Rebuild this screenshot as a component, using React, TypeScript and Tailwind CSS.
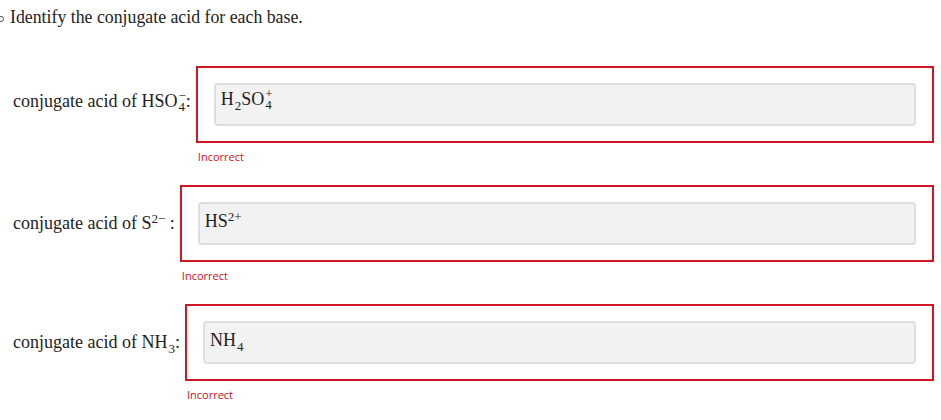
import type { ReactNode } from "react"

// sub + sup stacked on top of each other, like HSO4−
function Tensor({ sub, sup }: { sub: string; sup: string }) {
  return (
    <span className="inline-flex flex-col items-start align-baseline text-[13px] leading-[11px] relative -top-[7px] pl-[1px]">
      <span>{sup}</span>
      <span>{sub}</span>
    </span>
  )
}

function Sub({ children }: { children: ReactNode }) {
  return <span className="text-[13px] relative top-[5px] pl-[1px]">{children}</span>
}

function Sup({ children }: { children: ReactNode }) {
  return <span className="text-[13px] relative -top-[6px]">{children}</span>
}

interface RowProps {
  label: ReactNode
  value: ReactNode
}

function AnswerRow({ label, value }: RowProps) {
  return (
    <div className="flex items-start h-[98px]">
      <div className="h-[77px] flex items-center whitespace-nowrap pl-[13px] pr-[5px] text-[18px] leading-[20px] text-[#222]">
        {label}
      </div>
      <div className="flex-1 mr-[7px]">
        <div className="h-[77px] border-2 border-[#cf1624] px-[16px] py-[15px]">
          <div className="h-[43px] rounded-[4px] border-2 border-[#dedede] bg-[#f2f2f2] flex items-center pl-[5px] pb-[4px] text-[18px] leading-[20px] text-[#222]">
            {value}
          </div>
        </div>
        <div className="pl-[2px] pt-[7px] text-[11px] leading-[14px] text-[#d0101c] font-['Open_Sans',sans-serif]">
          Incorrect
        </div>
      </div>
    </div>
  )
}

export default function App() {
  return (
    <div className="w-[941px] h-[420px] bg-white overflow-hidden font-['Liberation_Serif','Times_New_Roman',serif] text-[#222]">
      <div className="flex items-center pt-[6px] h-[28px]">
        <span className="inline-block w-[4px] overflow-hidden">
          <span className="block w-[7px] h-[6px] -ml-[3px] mt-[4px] rounded-full border border-[#555]"></span>
        </span>
        <span className="pl-[6px] text-[17.8px]">Identify the conjugate acid for each base.</span>
      </div>

      <div className="pt-[38px] flex flex-col gap-[21px]">
        <AnswerRow
          label={
            <span>
              conjugate acid of HSO<Tensor sub="4" sup="−" />:
            </span>
          }
          value={
            <span>
              H<Sub>2</Sub>SO<Tensor sub="4" sup="+" />
            </span>
          }
        />
        <AnswerRow
          label={
            <span>
              conjugate acid of S<Sup>2−</Sup> :
            </span>
          }
          value={
            <span>
              HS<Sup>2+</Sup>
            </span>
          }
        />
        <AnswerRow
          label={
            <span>
              conjugate acid of NH<Sub>3</Sub>:
            </span>
          }
          value={
            <span>
              NH<Sub>4</Sub>
            </span>
          }
        />
      </div>
    </div>
  )
}
